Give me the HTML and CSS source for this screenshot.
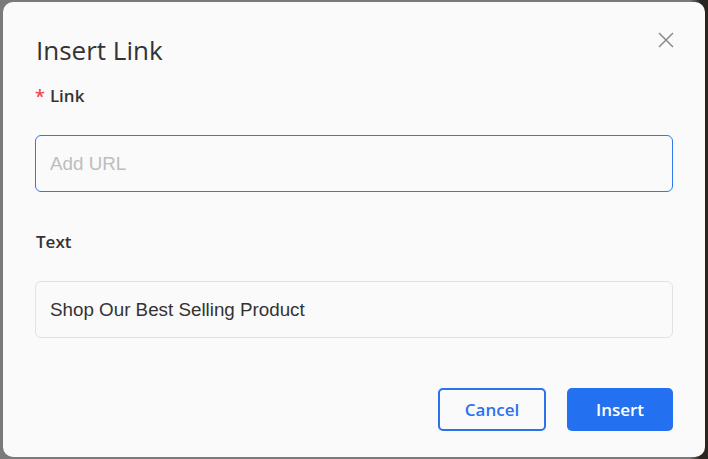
FILE: index.html
```html
<!DOCTYPE html>
<html>
<head>
<meta charset="utf-8">
<link rel="stylesheet" href="styles.css">
</head>
<body>
<div class="backdrop">
  <div class="dialog">
    <div class="header">
      <h1 class="title">Insert Link</h1>
      <button class="close" aria-label="Close">
        <svg width="16" height="16" viewBox="0 0 16 16"><path d="M1 1L15 15M15 1L1 15" stroke="#8a8a8a" stroke-width="1.5" fill="none"/></svg>
      </button>
    </div>
    <div class="field">
      <label class="label"><span class="req">*</span>Link</label>
      <div class="input focus"><span class="placeholder">Add URL</span></div>
    </div>
    <div class="field field-text">
      <label class="label">Text</label>
      <div class="input"><span class="value">Shop Our Best Selling Product</span></div>
    </div>
    <div class="actions">
      <button class="btn btn-cancel">Cancel</button>
      <button class="btn btn-insert">Insert</button>
    </div>
  </div>
</div>
</body>
</html>
```
FILE: styles.css
```css
html, body {
  margin: 0;
  padding: 0;
}
body {
  width: 708px;
  height: 459px;
  overflow: hidden;
  background: #777777;
}
.backdrop {
  width: 708px;
  height: 459px;
  box-sizing: border-box;
  padding: 2px 3px 2px 3px;
  background: linear-gradient(to right, #7a7a7a 0, #7a7a7a 690px, #2a2520 700px, #2a2520 708px);
}
.dialog {
  width: 702px;
  height: 455px;
  box-sizing: border-box;
  background: #fafafa;
  border-radius: 10px;
  padding: 30px 32px 26px 32px;
  display: flex;
  flex-direction: column;
  font-family: "Open Sans", "Noto Sans", sans-serif;
  color: #333333;
}
.header {
  display: flex;
  align-items: flex-start;
  justify-content: space-between;
  height: 36px;
}
.title {
  margin: 0 0 0 1px;
  font-size: 26px;
  line-height: 36px;
  font-weight: 400;
  color: #333333;
}
.close {
  border: 0;
  background: none;
  padding: 0;
  margin: 0 -1px 0 0;
  width: 16px;
  height: 16px;
  display: flex;
}
.field {
  display: flex;
  flex-direction: column;
  margin-top: 16px;
}
.field-text {
  margin-top: 38px;
}
.label {
  font-size: 17px;
  line-height: 24px;
  font-weight: 600;
  color: #333333;
  margin-left: 1px;
  margin-bottom: 27px;
  display: flex;
  align-items: flex-start;
}
.req {
  color: #f4474b;
  margin-right: 5px;
  margin-left: -1px;
  font-size: 18px;
}
.input {
  height: 57px;
  box-sizing: border-box;
  border: 1px solid #e2e2e2;
  border-radius: 6px;
  background: #fafafa;
  display: flex;
  align-items: center;
  padding-left: 14px;
  font-family: "Liberation Sans", Arial, sans-serif;
  font-size: 18.8px;
}
.input.focus {
  border-color: #2e78f0;
}
.placeholder {
  color: #bdbdbd;
}
.value {
  color: #333333;
}
.actions {
  margin-top: auto;
  display: flex;
  justify-content: flex-end;
  gap: 21px;
}
.btn {
  height: 43px;
  box-sizing: border-box;
  border-radius: 5px;
  font-family: "Open Sans", "Noto Sans", sans-serif;
  font-size: 17px;
  font-weight: 600;
  padding: 0;
  display: flex;
  align-items: center;
  justify-content: center;
}
.btn-cancel {
  width: 108px;
  border: 2px solid #2a72ee;
  background: #fafafa;
  color: #2a72ee;
}
.btn-insert {
  width: 106px;
  border: 0;
  background: #2371f0;
  color: #ffffff;
}
```
